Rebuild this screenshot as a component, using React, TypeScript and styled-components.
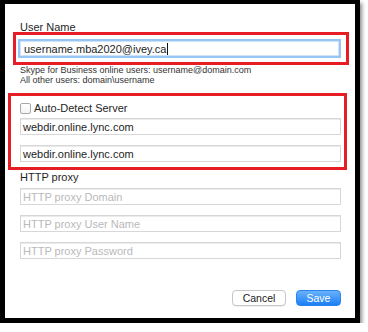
import * as React from "react";
import styled, { createGlobalStyle } from "styled-components";

const GlobalStyle = createGlobalStyle`
  html, body {
    margin: 0;
    padding: 0;
    background: #ffffff;
  }
  body {
    font-family: "Liberation Sans", Arial, sans-serif;
    -webkit-font-smoothing: antialiased;
  }
`;

export default function App() {
  return (
    <>
      <GlobalStyle />
      <Dialog>
        <Label>User Name</Label>
        <Highlight $left={7} $right={8} $padding="4px 5px 4px 2px">
          <Field $focused>
            username.mba2020@ivey.ca
            <Caret />
          </Field>
        </Highlight>
        <Hint>
          Skype for Business online users: username@domain.com
          <br />
          All other users: domain\username
        </Hint>

        <Highlight $left={12} $right={6} $padding="5px 3px 5px 9px" $top={8}>
          <CheckRow>
            <CheckBox />
            <span>Auto-Detect Server</span>
          </CheckRow>
          <FieldStack>
            <Field>webdir.online.lync.com</Field>
            <Field>webdir.online.lync.com</Field>
          </FieldStack>
        </Highlight>

        <Label $top={2}>HTTP proxy</Label>
        <ProxyStack>
          <Field $placeholder>HTTP proxy Domain</Field>
          <Field $placeholder>HTTP proxy User Name</Field>
          <Field $placeholder>HTTP proxy Password</Field>
        </ProxyStack>

        <Footer>
          <Button>Cancel</Button>
          <Button $primary>Save</Button>
        </Footer>
      </Dialog>
    </>
  );
}

const Dialog = styled.div`
  box-sizing: border-box;
  width: 360px;
  height: 323px;
  display: flex;
  flex-direction: column;
  padding: 18px 14px 12px 15px;
  background: #ffffff;
  border-style: solid;
  border-color: #000000;
  border-width: 4px 5px 5px 5px;
  box-shadow: 2px 3px 4px rgba(0, 0, 0, 0.45);
  color: #1e1e1e;
`;

const Label = styled.div<{ $top?: number }>`
  margin-top: ${({ $top }) => $top ?? 0}px;
  font-size: 11px;
  line-height: 10px;
  height: 10px;
  color: #262626;
`;

const Highlight = styled.div<{
  $left: number;
  $right: number;
  $padding: string;
  $top?: number;
}>`
  margin: ${({ $top }) => $top ?? 0}px -${({ $right }) => $right}px 0 -${({ $left }) => $left}px;
  padding: ${({ $padding }) => $padding};
  border: 3px solid #e61d25;
`;

const Field = styled.div<{ $focused?: boolean; $placeholder?: boolean }>`
  box-sizing: border-box;
  display: flex;
  align-items: center;
  height: ${({ $focused }) => ($focused ? 19 : 17)}px;
  padding-left: ${({ $focused }) => ($focused ? 4 : 2)}px;
  background: #ffffff;
  border: ${({ $focused }) =>
    $focused ? "2px solid #97c5f4" : "1px solid #d7d7d7"};
  box-shadow: ${({ $focused }) =>
    $focused ? "inset 0 0 0 1px #cfe3f8" : "inset 0 1px 0 #ebebeb"};
  font-size: 11px;
  white-space: nowrap;
  color: ${({ $placeholder }) => ($placeholder ? "#b9b9b9" : "#1e1e1e")};
`;

const Caret = styled.span`
  display: inline-block;
  width: 1px;
  height: 12px;
  margin-left: 1px;
  background: #111111;
`;

const Hint = styled.div`
  font-size: 9px;
  line-height: 10px;
  color: #333333;
  padding-left: 0;
`;

const CheckRow = styled.div`
  display: flex;
  align-items: center;
  gap: 3px;
  height: 14px;
  margin-bottom: 3px;
  font-size: 11px;
  color: #262626;
`;

const CheckBox = styled.span`
  box-sizing: border-box;
  width: 11px;
  height: 11px;
  border: 1px solid #a9a9a9;
  border-radius: 2px;
  background: linear-gradient(#ffffff, #f3f3f3);
`;

const FieldStack = styled.div`
  display: flex;
  flex-direction: column;
  gap: 10px;
`;

const ProxyStack = styled.div`
  display: flex;
  flex-direction: column;
  gap: 10px;
  margin-top: 6px;
`;

const Footer = styled.div`
  margin-top: auto;
  display: flex;
  justify-content: flex-end;
  gap: 10px;
`;

const Button = styled.div<{ $primary?: boolean }>`
  box-sizing: border-box;
  height: 16px;
  min-width: ${({ $primary }) => ($primary ? 45 : 54)}px;
  display: flex;
  align-items: center;
  justify-content: center;
  border-radius: 4px;
  font-size: 10.5px;
  border: 1px solid ${({ $primary }) => ($primary ? "#2a84f0" : "#c6c6c6")};
  background: ${({ $primary }) =>
    $primary ? "linear-gradient(#6ab2fb, #1c7ff6)" : "#ffffff"};
  color: ${({ $primary }) => ($primary ? "#ffffff" : "#222222")};
  box-shadow: ${({ $primary }) =>
    $primary ? "none" : "0 1px 0 rgba(0, 0, 0, 0.06)"};
`;
